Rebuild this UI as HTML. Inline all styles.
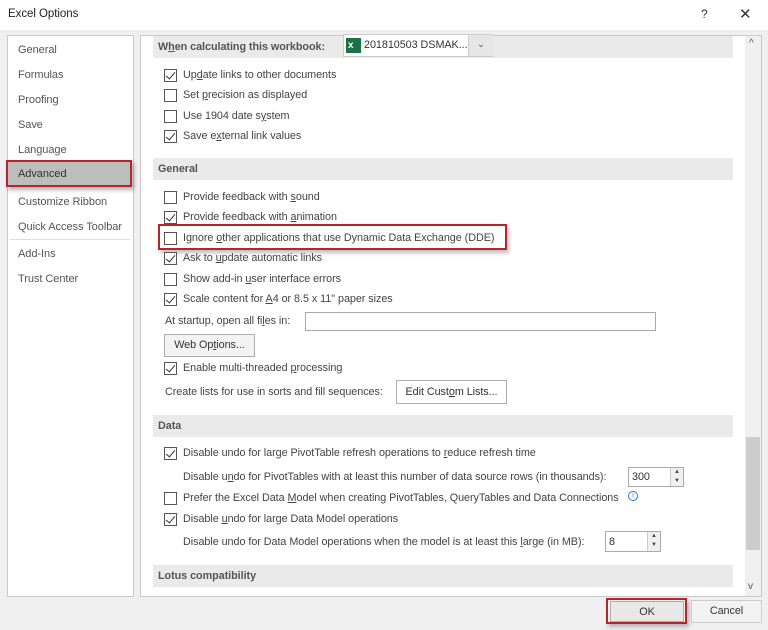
<!DOCTYPE html>
<html><head><meta charset="utf-8"><style>
*{box-sizing:border-box;margin:0;padding:0}
body{width:768px;height:630px;background:#f0f0f0;font-family:"Liberation Sans",sans-serif;font-size:10.8px;letter-spacing:-0.05px;color:#444;position:relative;overflow:hidden}
.a{position:absolute;white-space:nowrap}
.t{position:absolute;white-space:nowrap;line-height:14px}
.cb{position:absolute;width:13px;height:13px;border:1px solid #555;background:#fff}
.cb.c::after{content:"";position:absolute;left:3px;top:0px;width:4px;height:8px;border:solid #333;border-width:0 1.5px 1.5px 0;transform:rotate(40deg)}
.hdr{position:absolute;left:153px;width:580px;height:22px;background:#eaeaea;font-weight:bold;color:#555;padding:5px 5px;line-height:12px}
.btn{position:absolute;background:#f3f3f3;border:1px solid #adadad;text-align:center;line-height:20px;color:#333}
.in{position:absolute;background:#fff;border:1px solid #aaa}
.nav{position:absolute;left:18px;color:#555;font-size:11px}
</style></head><body>
<div class="a" style="left:0;top:0;width:768px;height:30px;background:#fff"></div>
<div class="a" style="left:8px;top:8px;font-size:11.5px;color:#222">Excel Options</div>
<div class="a" style="left:701px;top:7px;font-size:12px;color:#333">?</div>
<div class="a" style="left:739px;top:5px;font-size:15px;color:#333">✕</div>

<div class="a" style="left:7px;top:35px;width:127px;height:562px;background:#fff;border:1px solid #c8c8c8"></div>
<div class="nav" style="top:44px">General</div>
<div class="nav" style="top:69px">Formulas</div>
<div class="nav" style="top:94px">Proofing</div>
<div class="nav" style="top:119px">Save</div>
<div class="nav" style="top:144px">Language</div>
<div class="a" style="left:6px;top:160px;width:126px;height:27px;background:#bdbdbd;border:2px solid #b3262c;box-shadow:2px 3px 4px rgba(0,0,0,.3)"></div>
<div class="nav" style="top:168px;color:#333">Advanced</div>
<div class="nav" style="top:196px">Customize Ribbon</div>
<div class="nav" style="top:221px">Quick Access Toolbar</div>
<div class="a" style="left:10px;top:239px;width:120px;height:1px;background:#ddd"></div>
<div class="nav" style="top:248px">Add-Ins</div>
<div class="nav" style="top:273px">Trust Center</div>

<div class="a" style="left:140px;top:35px;width:622px;height:562px;background:#fff;border:1px solid #c8c8c8"></div>
<div class="a" style="left:745px;top:36px;width:16px;height:560px;background:#f0f0f0"></div>
<div class="a" style="left:746px;top:437px;width:14px;height:113px;background:#cdcdcd"></div>
<div class="a" style="left:749px;top:38px;font-size:10px;color:#555">^</div>
<div class="a" style="left:748px;top:581px;font-size:10px;color:#555">v</div>

<div class="hdr" style="top:36px">W<u>h</u>en calculating this workbook:</div>
<div class="a" style="left:343px;top:34px;width:150px;height:23px;background:#fff;border:1px solid #ccc"></div>
<div class="a" style="left:468px;top:35px;width:25px;height:21px;background:#e6e6e6;border-left:1px solid #ccc;text-align:center;color:#666;font-size:10px;line-height:20px">⌄</div>
<div class="a" style="left:346px;top:38px;width:15px;height:15px;background:#1e7145;color:#fff;font-size:10px;font-weight:bold;line-height:15px;padding-left:2px">x</div>
<div class="t" style="left:364px;top:38px;color:#333">201810503 DSMAK...</div>

<div class="cb c" style="left:164px;top:69px"></div><div class="t" style="left:183px;top:68px">Up<u>d</u>ate links to other documents</div>
<div class="cb" style="left:164px;top:89px"></div><div class="t" style="left:183px;top:88px">Set <u>p</u>recision as displayed</div>
<div class="cb" style="left:164px;top:110px"></div><div class="t" style="left:183px;top:109px">Use 1904 date s<u>y</u>stem</div>
<div class="cb c" style="left:164px;top:130px"></div><div class="t" style="left:183px;top:129px">Save e<u>x</u>ternal link values</div>

<div class="hdr" style="top:158px">General</div>
<div class="cb" style="left:164px;top:191px"></div><div class="t" style="left:183px;top:190px">Provide feedback with <u>s</u>ound</div>
<div class="cb c" style="left:164px;top:211px"></div><div class="t" style="left:183px;top:210px">Provide feedback with <u>a</u>nimation</div>
<div class="a" style="left:158px;top:224px;width:349px;height:26px;border:2px solid #b3262c;box-shadow:2px 3px 4px rgba(0,0,0,.25)"></div>
<div class="cb" style="left:164px;top:232px"></div><div class="t" style="left:183px;top:231px">Ignore <u>o</u>ther applications that use Dynamic Data Exchange (DDE)</div>
<div class="cb c" style="left:164px;top:252px"></div><div class="t" style="left:183px;top:251px">Ask to <u>u</u>pdate automatic links</div>
<div class="cb" style="left:164px;top:273px"></div><div class="t" style="left:183px;top:272px">Show add-in <u>u</u>ser interface errors</div>
<div class="cb c" style="left:164px;top:293px"></div><div class="t" style="left:183px;top:292px">Scale content for <u>A</u>4 or 8.5 x 11" paper sizes</div>
<div class="t" style="left:165px;top:314px">At startup, open all fi<u>l</u>es in:</div>
<div class="in" style="left:305px;top:312px;width:351px;height:19px"></div>
<div class="btn" style="left:164px;top:334px;width:91px;height:23px">Web Op<u>t</u>ions...</div>
<div class="cb c" style="left:164px;top:362px"></div><div class="t" style="left:183px;top:361px">Enable multi-threaded <u>p</u>rocessing</div>
<div class="t" style="left:165px;top:385px">Create lists for use in sorts and fill sequences:</div>
<div class="btn" style="left:396px;top:380px;width:111px;height:24px;background:#fff;line-height:22px">Edit Cust<u>o</u>m Lists...</div>

<div class="hdr" style="top:415px">Data</div>
<div class="cb c" style="left:164px;top:447px"></div><div class="t" style="left:183px;top:446px">Disable undo for large PivotTable refresh operations to <u>r</u>educe refresh time</div>
<div class="t" style="left:183px;top:470px">Disable u<u>n</u>do for PivotTables with at least this number of data source rows (in thousands):</div>
<div class="in" style="left:628px;top:467px;width:56px;height:20px"></div>
<div class="t" style="left:632px;top:470px;color:#333">300</div>
<div class="a" style="left:670px;top:468px;width:13px;height:18px;background:#f0f0f0;border-left:1px solid #ccc;font-size:6px;text-align:center;line-height:9px">▲<br>▼</div>
<div class="cb" style="left:164px;top:492px"></div><div class="t" style="left:183px;top:491px">Prefer the Excel Data <u>M</u>odel when creating PivotTables, QueryTables and Data Connections</div>
<div class="a" style="left:628px;top:491px;width:10px;height:10px;border:1px solid #2a7ad6;border-radius:50%;color:#2a7ad6;font-size:7px;text-align:center;line-height:8px">i</div>
<div class="cb c" style="left:164px;top:513px"></div><div class="t" style="left:183px;top:512px">Disable <u>u</u>ndo for large Data Model operations</div>
<div class="t" style="left:183px;top:535px">Disable undo for Data Model operations when the model is at least this <u>l</u>arge (in MB):</div>
<div class="in" style="left:605px;top:531px;width:56px;height:21px"></div>
<div class="t" style="left:609px;top:535px;color:#333">8</div>
<div class="a" style="left:647px;top:532px;width:13px;height:19px;background:#f0f0f0;border-left:1px solid #ccc;font-size:6px;text-align:center;line-height:9px">▲<br>▼</div>

<div class="hdr" style="top:565px">Lotus compatibility</div>

<div class="a" style="left:606px;top:598px;width:81px;height:26px;border:2px solid #b3262c;box-shadow:2px 3px 4px rgba(0,0,0,.25)"></div>
<div class="btn" style="left:610px;top:601px;width:74px;height:21px;background:#e8e8e8">OK</div>
<div class="btn" style="left:691px;top:600px;width:71px;height:23px;background:#f3f3f3;border-color:#ccc">Cancel</div>
</body></html>
